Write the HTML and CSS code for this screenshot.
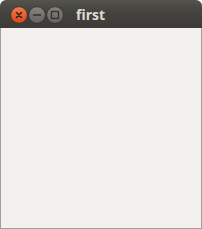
FILE: index.html
```html
<!DOCTYPE html>
<html lang="en">
<head>
    <meta charset="UTF-8">
    <title>first</title>
    <link rel="stylesheet" href="styles.css">
</head>
<body>

<div class="window">
    <div class="titlebar">
        <div class="controls">
            <!-- close -->
            <svg class="btn" width="18" height="18" viewBox="0 0 18 18">
                <defs>
                    <linearGradient id="closeFill" x1="0" y1="0" x2="0" y2="1">
                        <stop offset="0" stop-color="#f57b4b"/>
                        <stop offset="1" stop-color="#d9461a"/>
                    </linearGradient>
                </defs>
                <circle cx="9" cy="9" r="8.3" fill="url(#closeFill)" stroke="#35332f" stroke-width="0.8"/>
                <path d="M6.5 6.5 L11.5 11.5 M11.5 6.5 L6.5 11.5" stroke="#3a2118" stroke-width="1.6" stroke-linecap="round"/>
            </svg>
            <!-- minimize -->
            <svg class="btn" width="18" height="18" viewBox="0 0 18 18">
                <defs>
                    <linearGradient id="greyFill" x1="0" y1="0" x2="0" y2="1">
                        <stop offset="0" stop-color="#86847d"/>
                        <stop offset="1" stop-color="#64635d"/>
                    </linearGradient>
                </defs>
                <circle cx="9" cy="9" r="8.3" fill="url(#greyFill)" stroke="#35332f" stroke-width="0.8"/>
                <path d="M5 9 L13 9" stroke="#36352f" stroke-width="1.6"/>
            </svg>
            <!-- maximize -->
            <svg class="btn" width="18" height="18" viewBox="0 0 18 18">
                <circle cx="9" cy="9" r="8.3" fill="url(#greyFill)" stroke="#35332f" stroke-width="0.8"/>
                <rect x="5.5" y="5.5" width="7" height="7" fill="none" stroke="#36352f" stroke-width="1.4"/>
            </svg>
        </div>
        <span class="title">first</span>
    </div>
    <div class="content"></div>
</div>

</body>
</html>
```

FILE: styles.css
```css
body {
    margin: 0;
    padding: 0;
    background-color: #ffffff;
}

.window {
    width: 202px;
    height: 229px;
    display: flex;
    flex-direction: column;
    box-sizing: border-box;
}

.titlebar {
    height: 28px;
    flex: none;
    display: flex;
    align-items: center;
    padding-left: 10px;
    border-radius: 6px 6px 0 0;
    background: linear-gradient(#55534d, #45433e 40%, #3c3b37);
    box-sizing: border-box;
}

.controls {
    display: flex;
    margin-top: 2px;
}

.btn {
    display: block;
}

.title {
    margin-left: 12px;
    margin-top: 1px;
    font-family: "Open Sans", sans-serif;
    font-weight: bold;
    font-size: 14px;
    color: #dfdbd2;
}

.content {
    flex: 1;
    background-color: #f2f1f0;
    border: 1px solid #a19f99;
    border-top: none;
}
```
